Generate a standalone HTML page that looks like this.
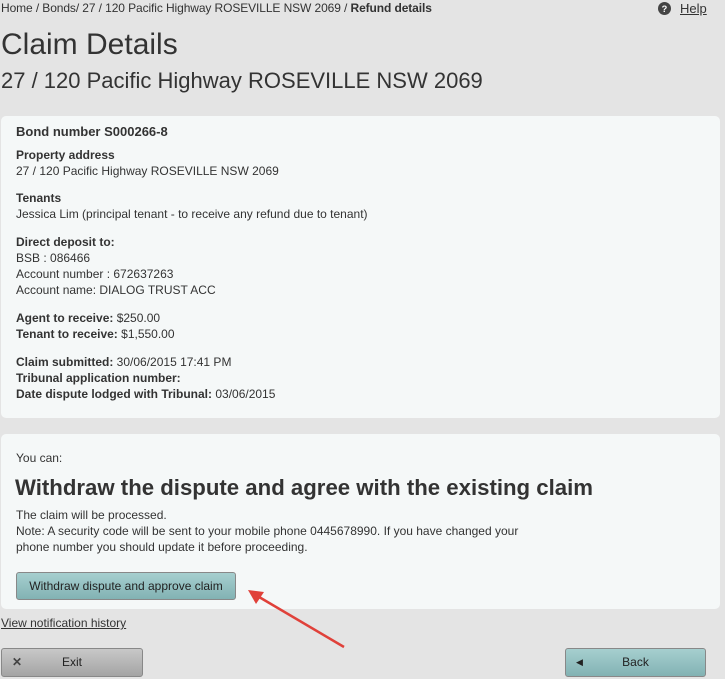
<!DOCTYPE html>
<html><head><meta charset="utf-8"><style>
body{margin:0;width:725px;height:679px;background:#e4e4e4;font-family:"Liberation Sans",Arial,sans-serif;color:#333;position:relative;overflow:hidden}
.a{position:absolute;white-space:nowrap}
.crumb{font-size:12px;top:1px;left:1px;letter-spacing:-.1px}
.panel{position:absolute;left:1px;width:719px;background:#f5f8f8;border-radius:5px}
.t{font-size:12px;line-height:16px}
.btn{position:absolute;border:1px solid #888;border-radius:3px;font-size:12px;text-align:center;color:#222}
</style></head><body>
<div class="a crumb">Home / Bonds/ 27 / 120 Pacific Highway ROSEVILLE NSW 2069 / <b>Refund details</b></div>
<svg class="a" style="left:658px;top:2px" width="13" height="13" viewBox="0 0 14 14"><circle cx="7" cy="7" r="7" fill="#444"/><text x="7" y="11" font-size="10" font-weight="bold" fill="#fff" text-anchor="middle" font-family="Liberation Sans">?</text></svg>
<div class="a" style="left:680px;top:1px;font-size:13px;text-decoration:underline">Help</div>
<div class="a" style="left:1px;top:28px;font-size:30px">Claim Details</div>
<div class="a" style="left:1px;top:68px;font-size:22px">27 / 120 Pacific Highway ROSEVILLE NSW 2069</div>
<div class="panel" style="top:116px;height:302px">
<div class="a t" style="left:15px;top:8px;font-size:13px;font-weight:bold">Bond number S000266-8</div>
<div class="a t" style="left:15px;top:31px"><b>Property address</b><br>27 / 120 Pacific Highway ROSEVILLE NSW 2069</div>
<div class="a t" style="left:15px;top:74px"><b>Tenants</b><br>Jessica Lim (principal tenant - to receive any refund due to tenant)</div>
<div class="a t" style="left:15px;top:118px"><b>Direct deposit to:</b><br>BSB : 086466<br>Account number : 672637263<br>Account name: DIALOG TRUST ACC</div>
<div class="a t" style="left:15px;top:194px"><b>Agent to receive:</b> $250.00<br><b>Tenant to receive:</b> $1,550.00</div>
<div class="a t" style="left:15px;top:238px"><b>Claim submitted:</b> 30/06/2015 17:41 PM<br><b>Tribunal application number:</b><br><b>Date dispute lodged with Tribunal:</b> 03/06/2015</div>
</div>
<div class="panel" style="top:434px;height:175px">
<div class="a t" style="left:15px;top:16px">You can:</div>
<div class="a" style="left:14px;top:41px;font-size:22.2px;font-weight:bold">Withdraw the dispute and agree with the existing claim</div>
<div class="a t" style="left:15px;top:73px">The claim will be processed.<br>Note: A security code will be sent to your mobile phone 0445678990. If you have changed your<br>phone number you should update it before proceeding.</div>
</div>
<div class="btn" style="left:16px;top:572px;width:218px;height:26px;line-height:26px;background:linear-gradient(#a6cfcf,#82b2b3)">Withdraw dispute and approve claim</div>
<svg class="a" style="left:240px;top:586px" width="110" height="66"><line x1="104" y1="61" x2="14" y2="8" stroke="#e0413a" stroke-width="2.5"/><polygon points="8,4 24,6 16,18" fill="#e0413a"/></svg>
<div class="a" style="left:1px;top:616px;font-size:12px;text-decoration:underline">View notification history</div>
<div class="btn" style="left:1px;top:648px;width:140px;height:27px;line-height:27px;background:linear-gradient(#c8c8c8,#a4a4a4)"><span style="position:absolute;left:10px;font-weight:bold;color:#444">✕</span>Exit</div>
<div class="btn" style="left:565px;top:648px;width:139px;height:27px;line-height:27px;background:linear-gradient(#a6cfcf,#82b2b3)"><span style="position:absolute;left:10px;font-size:9px">◀</span>Back</div>
</body></html>
